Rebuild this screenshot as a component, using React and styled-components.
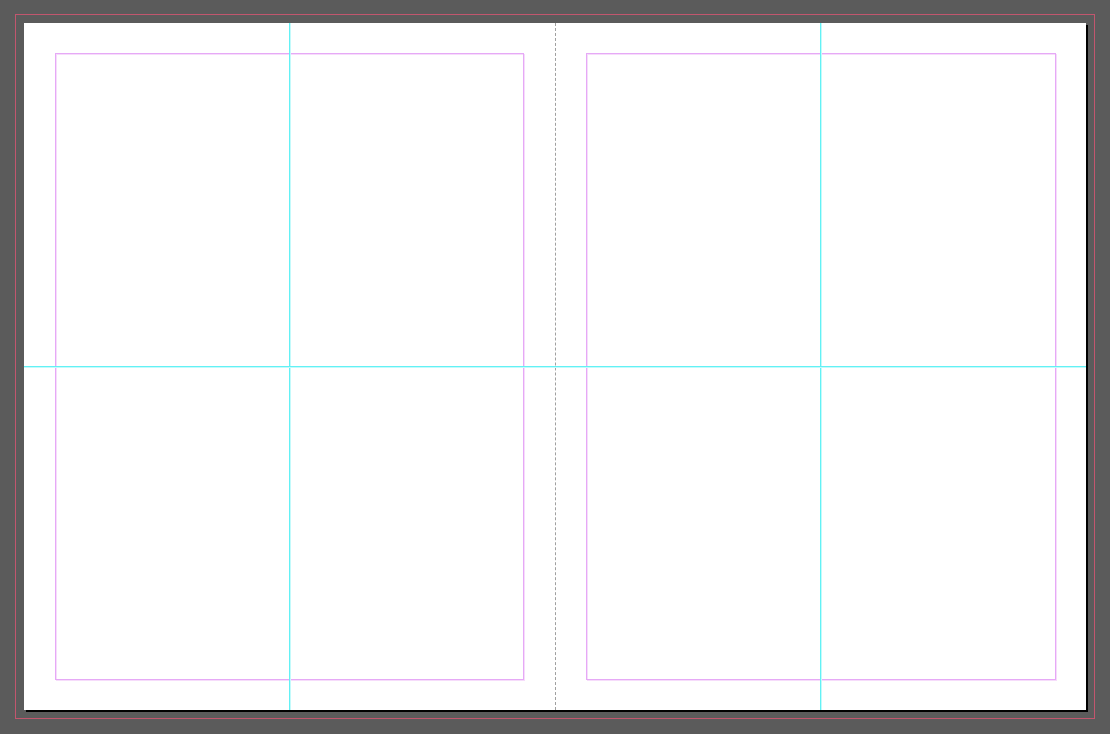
import React from "react";
import styled, { createGlobalStyle } from "styled-components";

const GlobalStyle = createGlobalStyle`
  html, body {
    margin: 0;
    padding: 0;
    background: #5b5b5b;
    font-family: "Liberation Sans", Arial, sans-serif;
  }
  #root {
    height: 734px;
  }
`;

const Pasteboard = styled.div`
  width: 1110px;
  height: 734px;
  box-sizing: border-box;
  padding: 14px 0 0 15px;
  background: #5b5b5b;
`;

const Bleed = styled.div`
  width: 1080px;
  height: 705px;
  box-sizing: border-box;
  border: 1px solid #c2566e;
  padding: 8px;
`;

const Spread = styled.div`
  position: relative;
  display: flex;
  width: 1062px;
  height: 687px;
  background: #ffffff;
  box-shadow: 2px 2px 0 #000000;
`;

// spine page gets the dashed fold line on its left edge
const Page = styled.div`
  position: relative;
  flex: 0 0 531px;
  height: 100%;
  box-sizing: border-box;
  padding: 30px 31px 30px 31px;
  ${(p) =>
    p.spine &&
    `
    border-left: 1px dashed #a0a0a0;
    padding-left: 30px;
    padding-right: 30px;
  `}
`;

const Margins = styled.div`
  width: 100%;
  height: 100%;
  box-sizing: border-box;
  border: 1px solid #e6a9f6;
  box-shadow: 1px 1px 0 #f6dcfb, inset 1px 1px 0 #f6dcfb;
`;

// ruler guides sit over the page
const VGuide = styled.div`
  position: absolute;
  top: 0;
  bottom: 0;
  left: ${(p) => p.x}px;
  width: 1px;
  background: #62f1f5;
  box-shadow: 1px 0 0 #c4fafb;
`;

const HGuide = styled.div`
  position: absolute;
  left: 0;
  right: 0;
  top: ${(p) => p.y}px;
  height: 1px;
  background: #62f1f5;
  box-shadow: 0 1px 0 #c4fafb;
`;

const App = () => {
  return (
    <>
      <GlobalStyle />
      <Pasteboard>
        <Bleed>
          <Spread>
            <Page>
              <Margins />
              <VGuide x={265} />
            </Page>
            <Page spine>
              <Margins />
              <VGuide x={264} />
            </Page>
            <HGuide y={343} />
          </Spread>
        </Bleed>
      </Pasteboard>
    </>
  );
};

export default App;
